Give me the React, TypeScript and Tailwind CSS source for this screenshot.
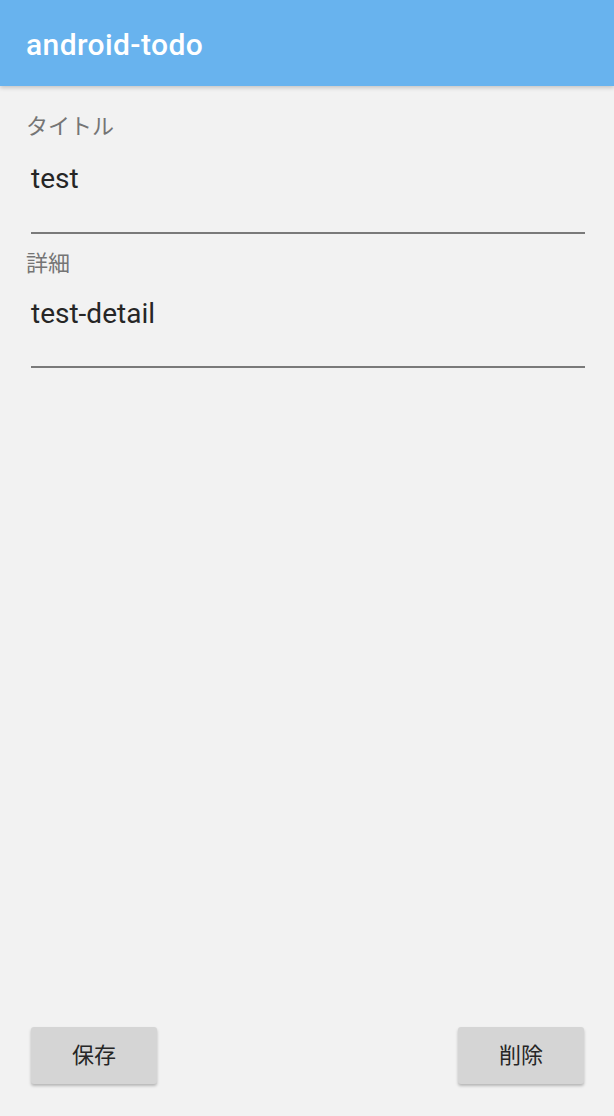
import React from "react";

export default function App() {
  const latin = { fontFamily: 'Roboto, "Noto Sans CJK JP", sans-serif' };
  return (
    <div
      className="w-[614px] h-[1116px] bg-[#f2f2f2] flex flex-col overflow-hidden"
      style={latin}
    >
      <header className="h-[86px] shrink-0 bg-[#68b3ee] flex items-center px-[26px] pt-[4px] shadow-[0_2px_4px_rgba(0,0,0,0.18)] relative z-10">
        <h1 className="text-white text-[30px] font-medium tracking-[0.4px] leading-none">
          android-todo
        </h1>
      </header>

      <main className="flex-1 flex flex-col">
        <div className="pt-[27px] pl-[26px] pr-[29px]">
          <div className="text-[22px] leading-[28px] text-[#757575]">タイトル</div>
          <div className="ml-[5px] mt-[18px] pb-[33px] border-b-2 border-[#7a7a7a] text-[28px] leading-[40px] text-[#262626]">
            test
          </div>
          <div className="mt-[16px] text-[22px] leading-[28px] text-[#757575]">詳細</div>
          <div className="ml-[5px] mt-[16px] pb-[32px] border-b-2 border-[#7a7a7a] text-[28px] leading-[40px] text-[#262626]">
            test-detail
          </div>
        </div>

        <div className="mt-auto flex justify-between pl-[31px] pr-[30px] pb-[32px]">
          <button className="w-[126px] h-[57px] bg-[#d5d5d5] rounded-[3px] shadow-[0_2px_3px_rgba(0,0,0,0.25)] text-[22px] text-[#262626]">
            保存
          </button>
          <button className="w-[126px] h-[57px] bg-[#d5d5d5] rounded-[3px] shadow-[0_2px_3px_rgba(0,0,0,0.25)] text-[22px] text-[#262626]">
            削除
          </button>
        </div>
      </main>
    </div>
  );
}
